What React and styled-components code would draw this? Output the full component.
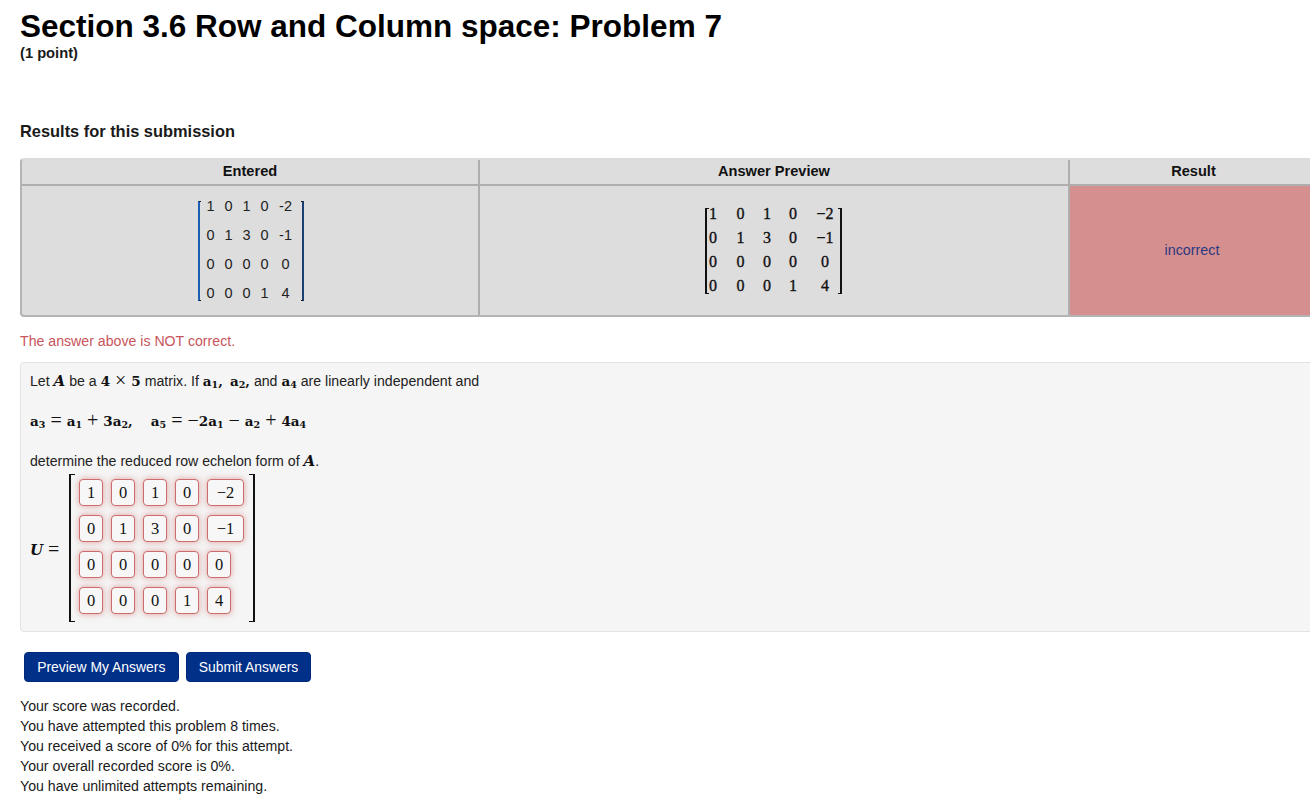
import React from "react";
import styled, { createGlobalStyle } from "styled-components";

const serif = `"Liberation Serif", "Times New Roman", serif`;
const mathBold = `"DejaVu Serif", "Liberation Serif", serif`;

const GlobalStyle = createGlobalStyle`
  html, body {
    margin: 0;
    padding: 0;
    background: #fff;
    overflow: hidden;
  }
  body {
    font-family: "Liberation Sans", Arial, sans-serif;
    font-size: 14.15px;
    line-height: 20px;
    color: #1a1a1a;
  }
`;

const Page = styled.div`
  width: 1330px;
  height: 801px;
  padding: 8px 0 0 20px;
  box-sizing: border-box;
`;

const Title = styled.h1`
  margin: 0;
  font-size: 31.5px;
  line-height: 36px;
  font-weight: bold;
  color: #000;
`;

const Points = styled.div`
  font-size: 14.7px;
  line-height: 18px;
  font-weight: bold;
  color: #1a1a1a;
`;

const SubHeading = styled.h2`
  margin: 58px 0 0;
  font-size: 16.4px;
  line-height: 22px;
  font-weight: bold;
  color: #1a1a1a;
`;

const ResultsTable = styled.table`
  margin-top: 16px;
  width: 1299px;
  table-layout: fixed;
  border-collapse: separate;
  border-spacing: 0;
  border: 2px solid #b4b4b4;
  border-top-color: #dcdcdc;
  border-radius: 4px;
  background: #ddd;
`;

const Head = styled.th`
  height: 26px;
  padding: 0 0 2px;
  font-size: 14.6px;
  font-weight: bold;
  text-align: center;
  color: #111;
  border-bottom: 2px solid #aeaeae;
  border-right: ${(p) => (p.$last ? "none" : "2px solid #aeaeae")};
  box-sizing: border-box;
`;

const Cell = styled.td`
  height: 129px;
  padding: 0;
  vertical-align: top;
  text-align: center;
  border-right: ${(p) => (p.$last ? "none" : "2px solid #aeaeae")};
  box-sizing: border-box;
`;

const ResultCell = styled(Cell)`
  background: #d68f8f;
  vertical-align: middle;
  color: #2b3a80;
  padding: 0 3px 2px 0;
  font-size: 14.3px;
`;

const Bracketed = styled.div`
  position: relative;
  display: inline-block;
`;

const Bracket = styled.span`
  position: absolute;
  top: ${(p) => p.$top || 0}px;
  bottom: 0;
  width: ${(p) => p.$width || 4}px;
  ${(p) => (p.$right ? "right: 0;" : "left: 0;")}
  ${(p) => (p.$right ? "border-right" : "border-left")}: 2px solid ${(p) => p.$color || "#111"};
  border-top: 1px solid #111;
  border-bottom: 1px solid #111;
  box-sizing: border-box;
`;

const EnteredMatrix = styled(Bracketed)`
  margin-top: 12px;
  margin-left: 1px;
  padding: 0 6px 0 4px;
`;

const EnteredGrid = styled.div`
  display: grid;
  grid-template-columns: repeat(4, 18px) 24px;
  grid-auto-rows: 16px;
  align-items: center;
  justify-items: center;
  align-content: space-between;
  height: 103px;
  font-size: 14.5px;
  line-height: 16px;
  color: #222;
`;

const PreviewMatrix = styled(Bracketed)`
  margin-top: 22px;
  margin-left: -1px;
  width: 137px;
  height: 86px;
`;

const PreviewGrid = styled.div`
  display: grid;
  grid-template-columns: 28px 27px 26px 26px 38px;
  grid-auto-rows: 24px;
  margin: -6px 0 0 -6px;
  align-items: center;
  justify-items: center;
  font-family: ${serif};
  font-size: 16px;
  -webkit-text-stroke: 0.35px #111;
  color: #111;
`;

const Feedback = styled.div`
  margin-top: 14px;
  color: #c8555a;
`;

const Panel = styled.div`
  margin-top: 11px;
  width: 1310px;
  height: 270px;
  padding: 8px 9px;
  box-sizing: border-box;
  background: #f5f5f5;
  border: 1px solid #e3e3e3;
  border-radius: 4px;
`;

const Para = styled.p`
  margin: 0 0 20px;
  color: #222;
  white-space: nowrap;
`;

const TightPara = styled(Para)`
  margin-bottom: 0;
`;

const Bold = styled.span`
  font-family: ${mathBold};
  font-size: ${(p) => (p.$italic ? 15 : 13.5)}px;
  line-height: 0;
  font-weight: bold;
  font-style: ${(p) => (p.$italic ? "italic" : "normal")};
  color: #111;
  white-space: pre;
`;

const Op = styled.span`
  font-family: ${serif};
  font-size: 20px;
  line-height: 0;
  vertical-align: -1px;
  color: #111;
  margin: 0 ${(p) => p.$gap ?? 5}px;
`;

const Gap = styled.span`
  display: inline-block;
  width: ${(p) => p.$size}px;
`;

const Sub = styled.sub`
  font-size: 9.5px;
  line-height: 0;
  vertical-align: -2px;
`;

const Equation = styled.div`
  display: flex;
  align-items: center;
  margin-top: 3px;
`;

const EquationLabel = styled.div`
  width: 39px;
  margin-top: 3px;
  white-space: pre;
`;

const InputMatrix = styled(Bracketed)`
  padding: 5px 11px 8px 10px;
`;

const InputGrid = styled.div`
  display: grid;
  grid-template-columns: repeat(5, auto);
  justify-content: start;
  justify-items: start;
  column-gap: 8px;
  row-gap: 9px;
`;

const Box = styled.span`
  display: flex;
  align-items: center;
  justify-content: center;
  width: ${(p) => (p.$wide ? 37 : 24)}px;
  height: 27px;
  box-sizing: border-box;
  border: 1px solid #cc6c6c;
  border-radius: 4px;
  box-shadow: 0 0 6px rgba(205, 90, 90, 0.55);
  background: #f7f7f7;
  font-family: ${serif};
  font-size: 16.5px;
  color: #111;
`;

const Buttons = styled.div`
  display: flex;
  gap: 7px;
  margin: 20px 0 0 4px;
`;

const Button = styled.button`
  height: 30px;
  padding: 0 12.2px;
  border: 1px solid #00297a;
  border-radius: 4px;
  background: #003087;
  color: #fff;
  font-family: inherit;
  font-size: 13.9px;
`;

const Summary = styled.div`
  margin-top: 14px;
  color: #1a1a1a;
`;

const entered = [
  ["1", "0", "1", "0", "-2"],
  ["0", "1", "3", "0", "-1"],
  ["0", "0", "0", "0", "0"],
  ["0", "0", "0", "1", "4"],
];
const signed = entered.map((row) => row.map((v) => v.replace("-", "−")));
const summary = [
  "Your score was recorded.",
  "You have attempted this problem 8 times.",
  "You received a score of 0% for this attempt.",
  "Your overall recorded score is 0%.",
  "You have unlimited attempts remaining.",
];

const A = ({ n }) => (
  <Bold>
    a<Sub>{n}</Sub>
  </Bold>
);

export default function App() {
  return (
    <Page>
      <GlobalStyle />
      <Title>Section 3.6 Row and Column space: Problem 7</Title>
      <Points>(1 point)</Points>
      <SubHeading>Results for this submission</SubHeading>

      <ResultsTable>
        <colgroup>
          <col style={{ width: 458 }} />
          <col style={{ width: 590 }} />
          <col />
        </colgroup>
        <thead>
          <tr>
            <Head>Entered</Head>
            <Head>Answer Preview</Head>
            <Head $last>Result</Head>
          </tr>
        </thead>
        <tbody>
          <tr>
            <Cell>
              <EnteredMatrix>
                <Bracket $top={3} $width={3} $color="#1a5fb4" />
                <Bracket $top={3} $width={3} $right $color="#1a3f74" />
                <EnteredGrid>
                  {entered.flat().map((v, i) => (
                    <span key={i}>{v}</span>
                  ))}
                </EnteredGrid>
              </EnteredMatrix>
            </Cell>
            <Cell>
              <PreviewMatrix>
                <Bracket />
                <Bracket $right />
                <PreviewGrid>
                  {signed.flat().map((v, i) => (
                    <span key={i}>{v}</span>
                  ))}
                </PreviewGrid>
              </PreviewMatrix>
            </Cell>
            <ResultCell $last>incorrect</ResultCell>
          </tr>
        </tbody>
      </ResultsTable>

      <Feedback>The answer above is NOT correct.</Feedback>

      <Panel>
        <Para>
          Let <Bold $italic>A</Bold> be a <Bold>4</Bold>
          <Op>×</Op>
          <Bold>5</Bold> matrix. If <A n="1" />
          <Bold>,</Bold>
          <Gap $size={7} />
          <A n="2" />
          <Bold>,</Bold> and <A n="4" /> are linearly independent and
        </Para>
        <Para>
          <A n="3" />
          <Op>=</Op>
          <A n="1" />
          <Op>+</Op>
          <Bold>3</Bold>
          <A n="2" />
          <Bold>,</Bold>
          <Gap $size={18} />
          <A n="5" />
          <Op>=</Op>
          <Op $gap={0}>−</Op>
          <Bold>2</Bold>
          <A n="1" />
          <Op>−</Op>
          <A n="2" />
          <Op>+</Op>
          <Bold>4</Bold>
          <A n="4" />
        </Para>
        <TightPara>
          determine the reduced row echelon form of <Bold $italic>A</Bold>.
        </TightPara>
        <Equation>
          <EquationLabel>
            <Bold $italic>U</Bold>
            <Op>=</Op>
          </EquationLabel>
          <InputMatrix>
            <Bracket $width={6} />
            <Bracket $width={6} $right />
            <InputGrid>
              {signed.flat().map((v, i) => (
                <Box key={i} $wide={v.length > 1}>{v}</Box>
              ))}
            </InputGrid>
          </InputMatrix>
        </Equation>
      </Panel>

      <Buttons>
        <Button>Preview My Answers</Button>
        <Button>Submit Answers</Button>
      </Buttons>

      <Summary>
        {summary.map((line) => (
          <div key={line}>{line}</div>
        ))}
      </Summary>
    </Page>
  );
}
